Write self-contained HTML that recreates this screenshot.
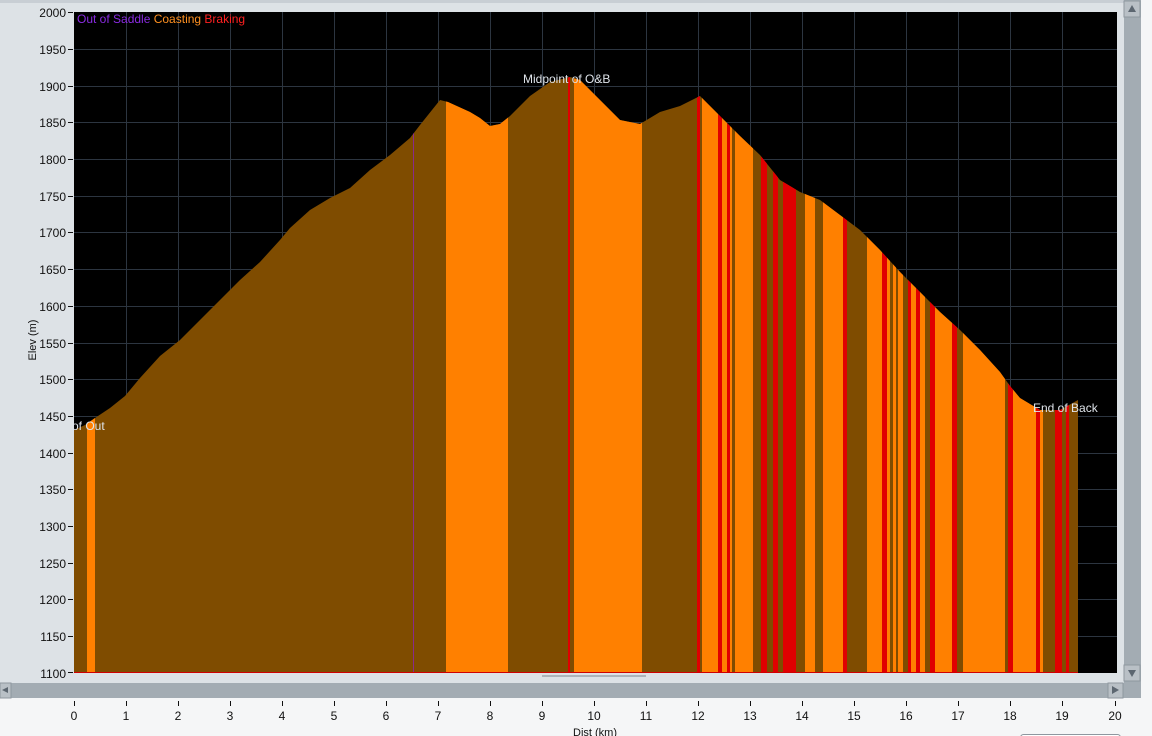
<!DOCTYPE html>
<html><head><meta charset="utf-8"><style>
html,body{margin:0;padding:0;width:1152px;height:736px;overflow:hidden;background:#dde2e6;font-family:"Liberation Sans",Arial,sans-serif;}
</style></head><body>
<svg width="1152" height="736" viewBox="0 0 1152 736" xmlns="http://www.w3.org/2000/svg" font-family="Liberation Sans, Arial, sans-serif">
<rect x="0" y="0" width="1152" height="736" fill="#dde2e6"/>
<rect x="0" y="0" width="1152" height="3" fill="#c8ced4"/>
<rect x="0" y="698" width="1152" height="38" fill="#f5f6f7"/>
<rect x="1141" y="0" width="11" height="736" fill="#f5f6f7"/>
<!-- right scrollbar -->
<rect x="1124" y="0" width="17" height="698" fill="#a3acb3"/>
<rect x="1124" y="1" width="16" height="16" fill="#b9c0c6" stroke="#8e979f"/>
<path d="M1128 12 L1132 5 L1136 12 Z" fill="#5c6670"/>
<rect x="1124" y="665" width="16" height="16" fill="#b9c0c6" stroke="#8e979f"/>
<path d="M1128 670 L1136 670 L1132 677 Z" fill="#5c6670"/>
<!-- bottom scrollbar -->
<rect x="0" y="683" width="1124" height="15" fill="#a3acb3"/>
<rect x="0" y="683" width="11" height="15" fill="#b9c0c6" stroke="#8e979f"/>
<path d="M2 690 L8 687 L8 693 Z" fill="#5c6670"/>
<rect x="1108" y="683" width="15" height="15" fill="#b9c0c6" stroke="#8e979f"/>
<path d="M1112 686 L1119 690 L1112 694 Z" fill="#5c6670"/>
<line x1="542" y1="676" x2="646" y2="676" stroke="#7b858e" stroke-width="1"/>
<!-- plot -->
<rect x="74" y="12" width="1043" height="661" fill="#000"/>
<g stroke="#2c3540" stroke-width="1">
<line x1="126.5" y1="12" x2="126.5" y2="673"/><line x1="178.5" y1="12" x2="178.5" y2="673"/><line x1="230.5" y1="12" x2="230.5" y2="673"/><line x1="282.5" y1="12" x2="282.5" y2="673"/><line x1="334.5" y1="12" x2="334.5" y2="673"/><line x1="386.5" y1="12" x2="386.5" y2="673"/><line x1="438.5" y1="12" x2="438.5" y2="673"/><line x1="490.5" y1="12" x2="490.5" y2="673"/><line x1="542.5" y1="12" x2="542.5" y2="673"/><line x1="594.5" y1="12" x2="594.5" y2="673"/><line x1="646.5" y1="12" x2="646.5" y2="673"/><line x1="698.5" y1="12" x2="698.5" y2="673"/><line x1="750.5" y1="12" x2="750.5" y2="673"/><line x1="802.5" y1="12" x2="802.5" y2="673"/><line x1="854.5" y1="12" x2="854.5" y2="673"/><line x1="906.5" y1="12" x2="906.5" y2="673"/><line x1="958.5" y1="12" x2="958.5" y2="673"/><line x1="1010.5" y1="12" x2="1010.5" y2="673"/><line x1="1062.5" y1="12" x2="1062.5" y2="673"/>
<line x1="74" y1="49.5" x2="1117" y2="49.5"/><line x1="74" y1="86.5" x2="1117" y2="86.5"/><line x1="74" y1="122.5" x2="1117" y2="122.5"/><line x1="74" y1="159.5" x2="1117" y2="159.5"/><line x1="74" y1="196.5" x2="1117" y2="196.5"/><line x1="74" y1="232.5" x2="1117" y2="232.5"/><line x1="74" y1="269.5" x2="1117" y2="269.5"/><line x1="74" y1="306.5" x2="1117" y2="306.5"/><line x1="74" y1="343.5" x2="1117" y2="343.5"/><line x1="74" y1="379.5" x2="1117" y2="379.5"/><line x1="74" y1="416.5" x2="1117" y2="416.5"/><line x1="74" y1="453.5" x2="1117" y2="453.5"/><line x1="74" y1="489.5" x2="1117" y2="489.5"/><line x1="74" y1="526.5" x2="1117" y2="526.5"/><line x1="74" y1="563.5" x2="1117" y2="563.5"/><line x1="74" y1="599.5" x2="1117" y2="599.5"/><line x1="74" y1="636.5" x2="1117" y2="636.5"/>
</g>
<defs><clipPath id="prof"><path d="M74 430 L85 425 L95 418 L110 408 L125 396 L140 378 L160 356 L180 340 L200 320 L220 300 L240 280 L260 262 L280 240 L290 228 L310 210 L330 198 L350 188 L370 170 L390 155 L410 138 L420 125 L440 100 L448 102 L470 112 L480 118 L490 126 L500 124 L510 116 L530 96 L550 82 L570 77 L580 80 L600 100 L620 120 L640 124 L660 112 L680 106 L700 96 L720 116 L740 136 L760 155 L780 180 L800 192 L820 200 L840 215 L860 230 L880 250 L900 272 L920 292 L940 312 L960 330 L980 350 L1000 372 L1010 386 L1020 398 L1040 410 L1060 410 L1078 400 L1078 673 L74 673 Z"/></clipPath></defs>
<g clip-path="url(#prof)">
<rect x="74" y="12" width="1004" height="661" fill="#7f4c00"/>
<g fill="#ff8000">
<rect x="87" y="0" width="8" height="673"/><rect x="446" y="0" width="62" height="673"/><rect x="574" y="0" width="68" height="673"/>
<rect x="702" y="0" width="16" height="673"/><rect x="722" y="0" width="5" height="673"/><rect x="730" y="0" width="2" height="673"/><rect x="735" y="0" width="18" height="673"/>
<rect x="805" y="0" width="10" height="673"/><rect x="823" y="0" width="20" height="673"/><rect x="867" y="0" width="15" height="673"/><rect x="887" y="0" width="3" height="673"/>
<rect x="893" y="0" width="3" height="673"/><rect x="898" y="0" width="5" height="673"/><rect x="911" y="0" width="5" height="673"/><rect x="920" y="0" width="5" height="673"/><rect x="935" y="0" width="17" height="673"/><rect x="963" y="0" width="42" height="673"/><rect x="1013" y="0" width="30" height="673"/>
</g>
<g fill="#e00000">
<rect x="568" y="0" width="2" height="673"/><rect x="697" y="0" width="3" height="673"/><rect x="718" y="0" width="4" height="673"/><rect x="727" y="0" width="3" height="673"/>
<rect x="761" y="0" width="6" height="673"/><rect x="773" y="0" width="5" height="673"/><rect x="783" y="0" width="13" height="673"/><rect x="843" y="0" width="4" height="673"/><rect x="882" y="0" width="5" height="673"/>
<rect x="908" y="0" width="3" height="673"/><rect x="916" y="0" width="4" height="673"/><rect x="930" y="0" width="5" height="673"/><rect x="952" y="0" width="5" height="673"/><rect x="1008" y="0" width="5" height="673"/><rect x="1036" y="0" width="4" height="673"/><rect x="1055" y="0" width="7" height="673"/><rect x="1066" y="0" width="3" height="673"/>
</g>
<rect x="413" y="0" width="1" height="673" fill="#8a2a8a"/>
</g>
<line x1="74" y1="672.5" x2="1078" y2="672.5" stroke="#d00000"/>
<text x="77" y="23" font-size="12"><tspan fill="#8a2be2">Out of Saddle </tspan><tspan fill="#ff9020">Coasting </tspan><tspan fill="#ff2020">Braking</tspan></text>
<g fill="#dfe4ea" font-size="12">
<text x="72" y="430">of Out</text>
<text x="523" y="83">Midpoint of O&amp;B</text>
<text x="1033" y="412">End of Back</text>
</g>
<!-- y axis -->
<g font-size="12" fill="#111" text-anchor="end">
<text x="66" y="17">2000</text><text x="66" y="54">1950</text><text x="66" y="91">1900</text><text x="66" y="127">1850</text><text x="66" y="164">1800</text><text x="66" y="201">1750</text><text x="66" y="237">1700</text><text x="66" y="274">1650</text><text x="66" y="311">1600</text><text x="66" y="348">1550</text><text x="66" y="384">1500</text><text x="66" y="421">1450</text><text x="66" y="458">1400</text><text x="66" y="494">1350</text><text x="66" y="531">1300</text><text x="66" y="568">1250</text><text x="66" y="604">1200</text><text x="66" y="641">1150</text><text x="66" y="678">1100</text>
</g>
<g stroke="#111"><line x1="68" y1="12.5" x2="73" y2="12.5"/><line x1="68" y1="49.5" x2="73" y2="49.5"/><line x1="68" y1="86.5" x2="73" y2="86.5"/><line x1="68" y1="122.5" x2="73" y2="122.5"/><line x1="68" y1="159.5" x2="73" y2="159.5"/><line x1="68" y1="196.5" x2="73" y2="196.5"/><line x1="68" y1="232.5" x2="73" y2="232.5"/><line x1="68" y1="269.5" x2="73" y2="269.5"/><line x1="68" y1="306.5" x2="73" y2="306.5"/><line x1="68" y1="343.5" x2="73" y2="343.5"/><line x1="68" y1="379.5" x2="73" y2="379.5"/><line x1="68" y1="416.5" x2="73" y2="416.5"/><line x1="68" y1="453.5" x2="73" y2="453.5"/><line x1="68" y1="489.5" x2="73" y2="489.5"/><line x1="68" y1="526.5" x2="73" y2="526.5"/><line x1="68" y1="563.5" x2="73" y2="563.5"/><line x1="68" y1="599.5" x2="73" y2="599.5"/><line x1="68" y1="636.5" x2="73" y2="636.5"/><line x1="68" y1="672.5" x2="73" y2="672.5"/></g>
<text x="36" y="340" font-size="11" fill="#111" text-anchor="middle" transform="rotate(-90 36 340)">Elev (m)</text>
<!-- x axis -->
<g stroke="#111"><line x1="74.5" y1="701" x2="74.5" y2="706"/><line x1="126.5" y1="701" x2="126.5" y2="706"/><line x1="178.5" y1="701" x2="178.5" y2="706"/><line x1="230.5" y1="701" x2="230.5" y2="706"/><line x1="282.5" y1="701" x2="282.5" y2="706"/><line x1="334.5" y1="701" x2="334.5" y2="706"/><line x1="386.5" y1="701" x2="386.5" y2="706"/><line x1="438.5" y1="701" x2="438.5" y2="706"/><line x1="490.5" y1="701" x2="490.5" y2="706"/><line x1="542.5" y1="701" x2="542.5" y2="706"/><line x1="594.5" y1="701" x2="594.5" y2="706"/><line x1="646.5" y1="701" x2="646.5" y2="706"/><line x1="698.5" y1="701" x2="698.5" y2="706"/><line x1="750.5" y1="701" x2="750.5" y2="706"/><line x1="802.5" y1="701" x2="802.5" y2="706"/><line x1="854.5" y1="701" x2="854.5" y2="706"/><line x1="906.5" y1="701" x2="906.5" y2="706"/><line x1="958.5" y1="701" x2="958.5" y2="706"/><line x1="1010.5" y1="701" x2="1010.5" y2="706"/><line x1="1062.5" y1="701" x2="1062.5" y2="706"/><line x1="1115.5" y1="701" x2="1115.5" y2="706"/></g>
<g font-size="12" fill="#111" text-anchor="middle">
<text x="74" y="720">0</text><text x="126" y="720">1</text><text x="178" y="720">2</text><text x="230" y="720">3</text><text x="282" y="720">4</text><text x="334" y="720">5</text><text x="386" y="720">6</text><text x="438" y="720">7</text><text x="490" y="720">8</text><text x="542" y="720">9</text><text x="594" y="720">10</text><text x="646" y="720">11</text><text x="698" y="720">12</text><text x="750" y="720">13</text><text x="802" y="720">14</text><text x="854" y="720">15</text><text x="906" y="720">16</text><text x="958" y="720">17</text><text x="1010" y="720">18</text><text x="1062" y="720">19</text><text x="1115" y="720">20</text>
<text x="595" y="736" font-size="11">Dist (km)</text>
</g>
<rect x="1020.5" y="734.5" width="100" height="6" rx="3" fill="#fff" stroke="#8e979f"/>
</svg>
</body></html>
